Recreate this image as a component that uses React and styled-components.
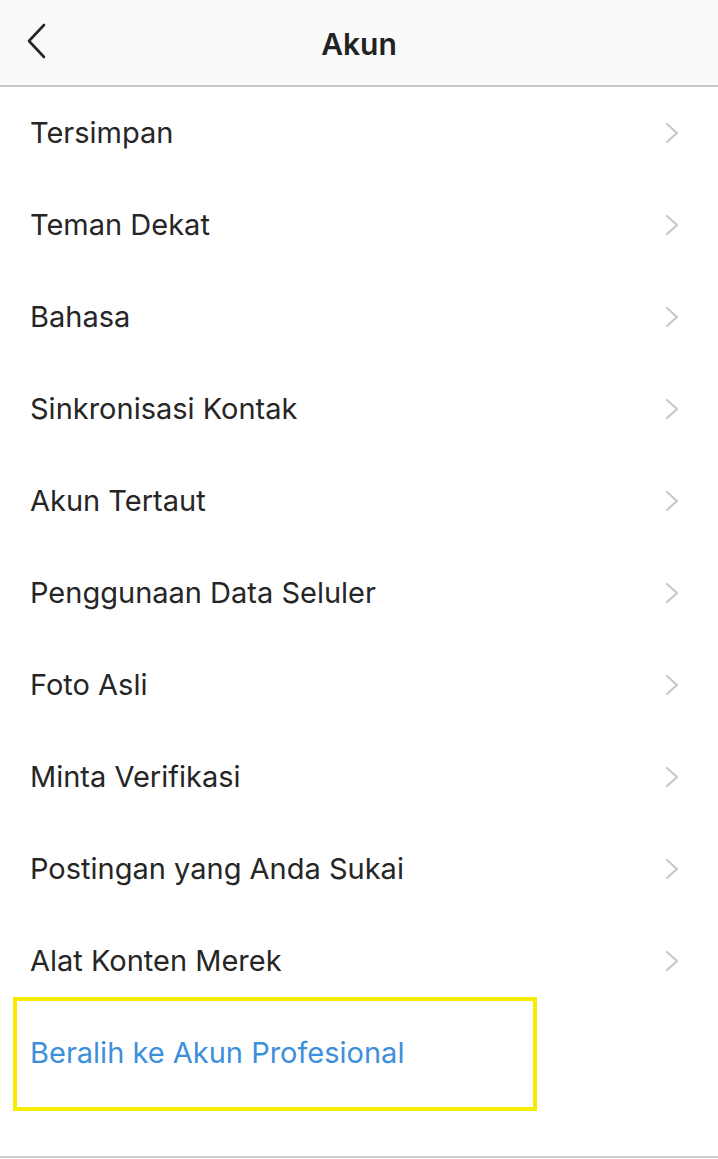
import React from "react";
import styled, { createGlobalStyle } from "styled-components";

const items = [
  "Tersimpan",
  "Teman Dekat",
  "Bahasa",
  "Sinkronisasi Kontak",
  "Akun Tertaut",
  "Penggunaan Data Seluler",
  "Foto Asli",
  "Minta Verifikasi",
  "Postingan yang Anda Sukai",
  "Alat Konten Merek",
];

const App = () => (
  <>
    <GlobalStyle />
    <Screen>
      <Header>
        <BackButton aria-label="back">
          <svg width="20" height="36" viewBox="0 0 20 36">
            <path d="M18 2 L3 18 L18 34" fill="none" stroke="#262626" strokeWidth="2.6" strokeLinecap="round" strokeLinejoin="round" />
          </svg>
        </BackButton>
        <Title>Akun</Title>
      </Header>
      <List>
        {items.map((label) => (
          <Row key={label}>
            <Label>{label}</Label>
            <svg width="16" height="22" viewBox="0 0 16 22">
              <path d="M3 2 L13 11 L3 20" fill="none" stroke="#c7c7cc" strokeWidth="2.2" strokeLinecap="round" strokeLinejoin="round" />
            </svg>
          </Row>
        ))}
        <Row>
          <Label $link>Beralih ke Akun Profesional</Label>
          <Highlight />
        </Row>
      </List>
      <Footer />
    </Screen>
  </>
);

export default App;

// ---------------------------- styled-components ----------------------
const GlobalStyle = createGlobalStyle`
  body {
    margin: 0;
    background: #fff;
    font-family: Inter, "Noto Sans", sans-serif;
  }
`;

const Screen = styled.div`
  width: 718px;
  display: flex;
  flex-direction: column;
`;

const Header = styled.div`
  height: 85px;
  background: #fafafa;
  border-bottom: 2px solid #c8c8c8;
  display: flex;
  align-items: center;
  justify-content: center;
  position: relative;
`;

const BackButton = styled.div`
  position: absolute;
  left: 26px;
  top: 23px;
  display: flex;
`;

const Title = styled.div`
  font-size: 30px;
  font-weight: 600;
  color: #222;
  margin-top: 2px;
`;

const List = styled.div`
  display: flex;
  flex-direction: column;
`;

const Row = styled.div`
  height: 92px;
  display: flex;
  align-items: center;
  justify-content: space-between;
  padding: 0 38px 0 30px;
  position: relative;
`;

const Label = styled.div`
  font-size: 29px;
  margin-top: -2px;
  color: ${(p) => (p.$link ? "#3d8fdc" : "#262626")};
`;

const Highlight = styled.div`
  position: absolute;
  left: 13px;
  top: -10px;
  width: 524px;
  height: 114px;
  box-sizing: border-box;
  border: 4px solid #f5ec00;
  pointer-events: none;
`;

const Footer = styled.div`
  height: 57px;
  border-bottom: 2px solid #cfcfcf;
`;
